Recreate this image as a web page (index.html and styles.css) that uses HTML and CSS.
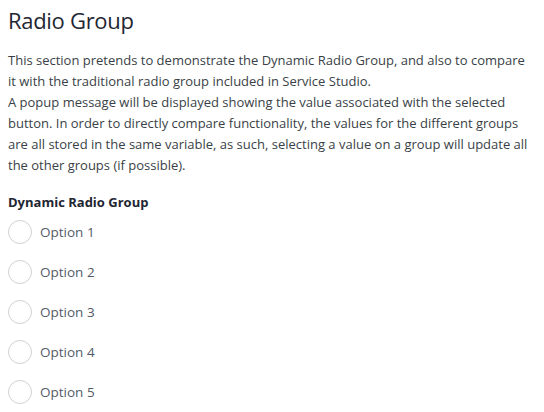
FILE: index.html
```html
<!DOCTYPE html>
<html lang="en">
<head>
<meta charset="utf-8">
<title>Radio Group</title>
<link rel="stylesheet" href="styles.css">
</head>
<body>
<main class="page">
  <h1 class="title">Radio Group</h1>
  <p class="intro">This section pretends to demonstrate the Dynamic Radio Group, and also to compare it with the traditional radio group included in Service Studio.<br>A popup message will be displayed showing the value associated with the selected button. In order to directly compare functionality, the values for the different groups are all stored in the same variable, as such, selecting a value on a group will update all the other groups (if possible).</p>
  <section class="group">
    <h2 class="group-title">Dynamic Radio Group</h2>
    <div class="radio-list" role="radiogroup">
      <label class="radio"><input type="radio" name="dyn" value="1"><span class="mark"></span><span class="label">Option 1</span></label>
      <label class="radio"><input type="radio" name="dyn" value="2"><span class="mark"></span><span class="label">Option 2</span></label>
      <label class="radio"><input type="radio" name="dyn" value="3"><span class="mark"></span><span class="label">Option 3</span></label>
      <label class="radio"><input type="radio" name="dyn" value="4"><span class="mark"></span><span class="label">Option 4</span></label>
      <label class="radio"><input type="radio" name="dyn" value="5"><span class="mark"></span><span class="label">Option 5</span></label>
    </div>
  </section>
</main>
</body>
</html>
```

FILE: styles.css
```css
html, body {
  margin: 0;
  padding: 0;
  background: #ffffff;
}

body {
  font-family: "Open Sans", "Noto Sans", sans-serif;
  color: #333a44;
}

.page {
  padding: 4px 8px 0 8px;
}

.title {
  margin: 0;
  font-size: 22px;
  font-weight: 400;
  letter-spacing: -0.3px;
  line-height: 32px;
  color: #1f2633;
}

.intro {
  margin: 14px 0 0 0;
  font-size: 13px;
  line-height: 21px;
  color: #3a3f47;
}

.group {
  margin-top: 16px;
}

.group-title {
  margin: 0;
  font-size: 13px;
  font-weight: 700;
  line-height: 20px;
  color: #1f2633;
}

.radio-list {
  display: flex;
  flex-direction: column;
  gap: 16px;
  margin-top: 8px;
}

.radio {
  display: flex;
  align-items: center;
  gap: 8px;
  height: 24px;
  cursor: pointer;
}

.radio input {
  position: absolute;
  opacity: 0;
  width: 0;
  height: 0;
}

.mark {
  box-sizing: border-box;
  width: 24px;
  height: 24px;
  border: 1px solid #cfd1d4;
  border-radius: 50%;
  background: #fff;
  flex: none;
}

.label {
  font-size: 13.5px;
  color: #545b66;
}
```
